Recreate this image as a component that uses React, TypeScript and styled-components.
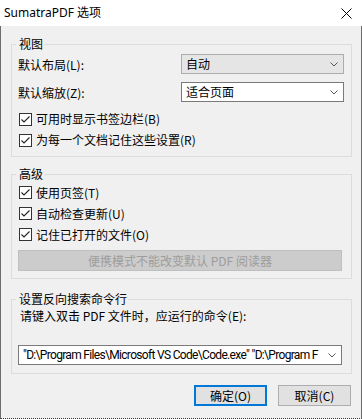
import React from 'react'
import styled, { createGlobalStyle } from 'styled-components'

const GlobalStyle = createGlobalStyle`
    html, body {
        margin: 0;
        padding: 0;
        background: #ffffff;
    }
    body {
        font-family: "Noto Sans CJK SC", "Noto Sans", sans-serif;
        font-size: 12px;
        color: #000000;
    }
    * {
        box-sizing: border-box;
    }
`

const Window = styled.div`
    width: 362px;
    height: 419px;
    display: flex;
    flex-direction: column;
    background: #ffffff;
    overflow: hidden;
`
const TitleBar = styled.div`
    height: 26px;
    flex: none;
    display: flex;
    align-items: center;
    justify-content: space-between;
    padding: 0 10px 0 4px;
    background: #ffffff;
`
const Title = styled.div`
    font-family: "Noto Sans", "Noto Sans CJK SC", sans-serif;
    font-size: 12px;
    line-height: 16px;
`
const Client = styled.div`
    flex: 1;
    display: flex;
    flex-direction: column;
    background: #f0f0f0;
    border-left: 1px solid #6d6d6d;
    border-right: 1px solid #6d6d6d;
    border-bottom: 1px dotted #3c3c3c;
    padding: 0 9px 0 10px;
`
const Group = styled.fieldset<{ $top: number }>`
    margin: ${p => p.$top}px 0 0;
    padding: 0;
    border: 1px solid #dcdcdc;
    min-inline-size: 0;
`
const Legend = styled.legend`
    margin-left: 4px;
    padding: 0 1px 0 3px;
    height: 16px;
    line-height: 16px;
`
const GroupBody = styled.div<{ $pad: string }>`
    display: flex;
    flex-direction: column;
    padding: ${p => p.$pad};
`
const FieldRow = styled.div`
    display: grid;
    grid-template-columns: 1fr 163px;
    align-items: center;
    height: 20px;
    & + & {
        margin-top: 8px;
    }
`
const Combo = styled.div<{ $flat?: boolean; $top?: number }>`
    height: 20px;
    margin-top: ${p => p.$top ?? 0}px;
    display: flex;
    align-items: center;
    gap: 6px;
    padding: 0 5px 0 4px;
    border: 1px solid ${p => (p.$flat ? '#adadad' : '#7a7a7a')};
    background: ${p => (p.$flat ? '#e5e5e5' : '#ffffff')};
    line-height: 16px;
`
const ComboText = styled.span<{ $tight?: boolean }>`
    flex: 1;
    overflow: hidden;
    white-space: nowrap;
    font-family: ${p => (p.$tight ? '"Roboto", "Noto Sans", sans-serif' : 'inherit')};
    letter-spacing: ${p => (p.$tight ? '-0.68px' : 'normal')};
`
const CheckRow = styled.label<{ $h: number; $top?: number }>`
    display: flex;
    align-items: center;
    gap: 4px;
    height: ${p => p.$h}px;
    margin-top: ${p => p.$top ?? 0}px;
    padding-left: 1px;
    line-height: 16px;
`
const DisabledButton = styled.div`
    height: 21px;
    margin-top: 5px;
    display: flex;
    align-items: center;
    justify-content: center;
    background: #cccccc;
    border: 1px solid #bfbfbf;
    color: #9d9d9d;
`
const Hint = styled.div`
    padding-left: 2px;
    height: 16px;
    line-height: 16px;
`
const ButtonRow = styled.div`
    display: flex;
    justify-content: flex-end;
    gap: 11px;
    margin-top: 11px;
    padding-right: 1px;
`
const Button = styled.div<{ $primary?: boolean }>`
    width: 73px;
    height: 21px;
    display: flex;
    align-items: center;
    justify-content: center;
    background: #e1e1e1;
    border: ${p => (p.$primary ? '2px solid #0078d7' : '1px solid #adadad')};
`

const Chevron = () => (
    <svg width="8" height="5" viewBox="0 0 8 5">
        <path d="M0.5 0.5 L4 4 L7.5 0.5" fill="none" stroke="#555" strokeWidth="1" />
    </svg>
)

const CheckBox = () => (
    <svg width="13" height="13" viewBox="0 0 13 13">
        <rect x="0.5" y="0.5" width="12" height="12" fill="#ffffff" stroke="#333333" />
        <path d="M2.5 6.5 L5 9 L10.5 3.5" fill="none" stroke="#222222" strokeWidth="1.1" />
    </svg>
)

const CloseIcon = () => (
    <svg width="11" height="11" viewBox="0 0 11 11">
        <path d="M0.5 0.5 L10.5 10.5 M10.5 0.5 L0.5 10.5" stroke="#000" strokeWidth="1" />
    </svg>
)

// only the part of the command that fits in the box is shown
const command = '"D:\\Program Files\\Microsoft VS Code\\Code.exe" "D:\\Program F'

const App = () => {
    return (
        <>
            <GlobalStyle />
            <Window>
                <TitleBar>
                    <Title>SumatraPDF 选项</Title>
                    <CloseIcon />
                </TitleBar>
                <Client>
                    <Group $top={10}>
                        <Legend>视图</Legend>
                        <GroupBody $pad="2px 7px 7px 6px">
                            <FieldRow>
                                <span>默认布局(L):</span>
                                <Combo $flat>
                                    <ComboText>自动</ComboText>
                                    <Chevron />
                                </Combo>
                            </FieldRow>
                            <FieldRow>
                                <span>默认缩放(Z):</span>
                                <Combo>
                                    <ComboText>适合页面</ComboText>
                                    <Chevron />
                                </Combo>
                            </FieldRow>
                            <CheckRow $h={18} $top={8}>
                                <CheckBox />
                                可用时显示书签边栏(B)
                            </CheckRow>
                            <CheckRow $h={18} $top={3}>
                                <CheckBox />
                                为每一个文档记住这些设置(R)
                            </CheckRow>
                        </GroupBody>
                    </Group>
                    <Group $top={9}>
                        <Legend>高级</Legend>
                        <GroupBody $pad="0 9px 7px 6px">
                            <CheckRow $h={21}>
                                <CheckBox />
                                使用页签(T)
                            </CheckRow>
                            <CheckRow $h={21}>
                                <CheckBox />
                                自动检查更新(U)
                            </CheckRow>
                            <CheckRow $h={21}>
                                <CheckBox />
                                记住已打开的文件(O)
                            </CheckRow>
                            <DisabledButton>便携模式不能改变默认 PDF 阅读器</DisabledButton>
                        </GroupBody>
                    </Group>
                    <Group $top={12}>
                        <Legend>设置反向搜索命令行</Legend>
                        <GroupBody $pad="1px 9px 8px 6px">
                            <Hint>请键入双击 PDF 文件时，应运行的命令(E):</Hint>
                            <Combo $top={21}>
                                <ComboText $tight>{command}</ComboText>
                                <Chevron />
                            </Combo>
                        </GroupBody>
                    </Group>
                    <ButtonRow>
                        <Button $primary>确定(O)</Button>
                        <Button>取消(C)</Button>
                    </ButtonRow>
                </Client>
            </Window>
        </>
    )
}

export default App
